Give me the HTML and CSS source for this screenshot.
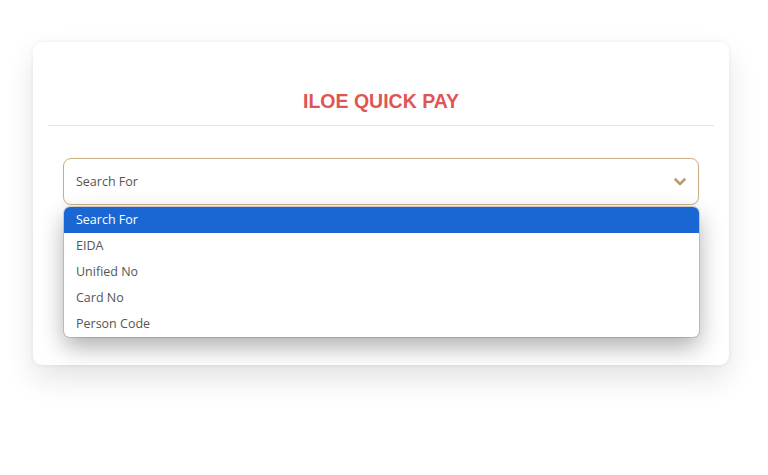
FILE: index.html
```html
<!DOCTYPE html>
<html>
<head>
<meta charset="utf-8">
<link rel="stylesheet" href="styles.css">
</head>
<body>
<div class="page">
  <div class="card">
    <div class="card-head">
      <h1 class="title">ILOE QUICK PAY</h1>
    </div>
    <div class="card-body">
      <div class="select-wrap">
        <div class="select">
          <span class="select-text">Search For</span>
          <svg class="chev" width="12" height="8" viewBox="0 0 12 8"><path d="M1.5 1.5 L6 6 L10.5 1.5" fill="none" stroke="#b89d72" stroke-width="2.6" stroke-linecap="round" stroke-linejoin="round"/></svg>
        </div>
        <ul class="menu">
          <li class="opt active">Search For</li>
          <li class="opt">EIDA</li>
          <li class="opt">Unified No</li>
          <li class="opt">Card No</li>
          <li class="opt">Person Code</li>
        </ul>
      </div>
    </div>
  </div>
</div>
</body>
</html>
```
FILE: styles.css
```css
html, body {
  margin: 0;
  padding: 0;
  background: #ffffff;
}
.page {
  min-height: 475px;
  box-sizing: border-box;
  padding: 42px 39px 60px 33px;
}
.card {
  width: 696px;
  height: 323px;
  box-sizing: border-box;
  background: #fff;
  border-radius: 9px;
  box-shadow: 0 14px 30px rgba(0,0,0,0.11), 0 0 4px rgba(0,0,0,0.07);
  padding: 0 15px;
}
.card-head {
  height: 83px;
  border-bottom: 1px solid #e4e4e4;
  display: flex;
  align-items: flex-end;
  justify-content: center;
}
.title {
  margin: 0 0 13px 0;
  font-family: "Liberation Sans", Arial, sans-serif;
  font-weight: bold;
  font-size: 19.5px;
  line-height: 22px;
  color: #e15454;
}
.card-body {
  padding: 32px 15px 0 15px;
}
.select-wrap {
  position: relative;
}
.select {
  height: 47px;
  box-sizing: border-box;
  border: 1px solid #ccb085;
  border-radius: 8px;
  display: flex;
  align-items: center;
  justify-content: space-between;
  padding: 0 12px 0 12px;
  background: #fff;
  box-shadow: 0 1px 3px rgba(0,0,0,0.06);
}
.select-text {
  font-family: "Open Sans", sans-serif;
  font-size: 12.5px;
  color: #555;
}
.chev {
  display: block;
}
.menu {
  position: absolute;
  left: 1px;
  right: 0;
  top: 49px;
  margin: 0;
  padding: 0;
  list-style: none;
  background: #fff;
  border-radius: 6px;
  overflow: hidden;
  box-shadow: 0 0 0 1px rgba(0,0,0,0.14), 0 10px 24px rgba(0,0,0,0.32);
}
.opt {
  height: 26px;
  line-height: 26px;
  padding: 0 12px;
  font-family: "Open Sans", sans-serif;
  font-size: 12.5px;
  color: #555;
}
.opt.active {
  background: #1a66d2;
  color: #fff;
}
```
